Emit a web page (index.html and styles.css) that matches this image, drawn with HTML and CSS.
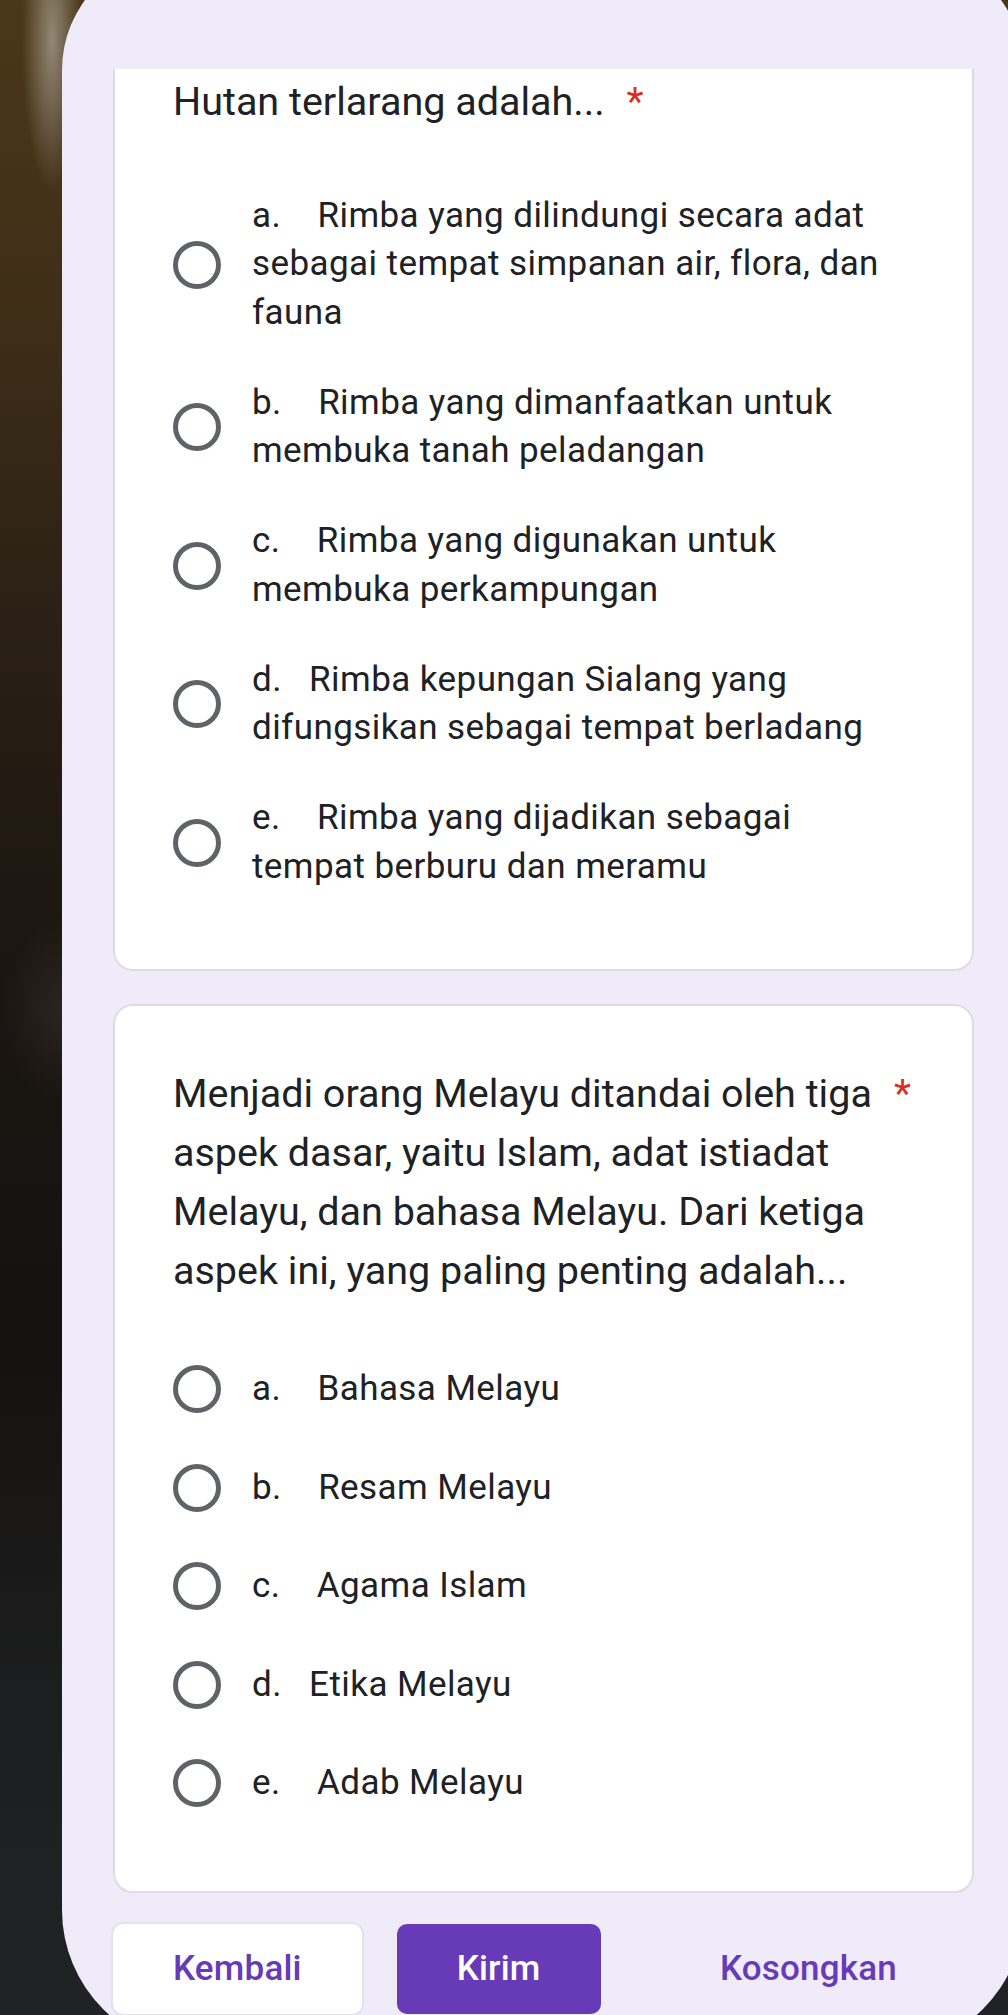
FILE: index.html
```html
<!DOCTYPE html>
<html lang="id">
<head>
<meta charset="utf-8">
<title>Formulir</title>
<link rel="stylesheet" href="styles.css">
</head>
<body>
<div class="panel">
  <section class="card card--cut">
    <div class="q-title"><span class="q-text">Hutan terlarang adalah...</span><span class="req">*</span></div>
    <div class="options">
      <div class="opt"><span class="radio"></span><span class="opt-text">a.    Rimba yang dilindungi secara adat<br>sebagai tempat simpanan air, flora, dan<br>fauna</span></div>
      <div class="opt"><span class="radio"></span><span class="opt-text">b.    Rimba yang dimanfaatkan untuk<br>membuka tanah peladangan</span></div>
      <div class="opt"><span class="radio"></span><span class="opt-text">c.    Rimba yang digunakan untuk<br>membuka perkampungan</span></div>
      <div class="opt"><span class="radio"></span><span class="opt-text">d.   Rimba kepungan Sialang yang<br>difungsikan sebagai tempat berladang</span></div>
      <div class="opt"><span class="radio"></span><span class="opt-text">e.    Rimba yang dijadikan sebagai<br>tempat berburu dan meramu</span></div>
    </div>
  </section>
  <section class="card">
    <div class="q-title"><span class="q-text">Menjadi orang Melayu ditandai oleh tiga<br>aspek dasar, yaitu Islam, adat istiadat<br>Melayu, dan bahasa Melayu. Dari ketiga<br>aspek ini, yang paling penting adalah...</span><span class="req">*</span></div>
    <div class="options">
      <div class="opt"><span class="radio"></span><span class="opt-text">a.    Bahasa Melayu</span></div>
      <div class="opt"><span class="radio"></span><span class="opt-text">b.    Resam Melayu</span></div>
      <div class="opt"><span class="radio"></span><span class="opt-text">c.    Agama Islam</span></div>
      <div class="opt"><span class="radio"></span><span class="opt-text">d.   Etika Melayu</span></div>
      <div class="opt"><span class="radio"></span><span class="opt-text">e.    Adab Melayu</span></div>
    </div>
  </section>
  <div class="actions">
    <button class="btn btn--back" type="button">Kembali</button>
    <button class="btn btn--submit" type="button">Kirim</button>
    <button class="btn btn--clear" type="button">Kosongkan</button>
  </div>
</div>
</body>
</html>
```

FILE: styles.css
```css
html, body {
  margin: 0;
  height: 2015px;
  overflow: hidden;
}

body {
  font-family: Roboto, "Noto Sans", "Liberation Sans", sans-serif;
  background:
    radial-gradient(ellipse 30px 150px at 52px 40px, rgba(150, 140, 122, 0.95), rgba(150, 140, 122, 0) 100%),
    radial-gradient(ellipse 60px 90px at 60px 1010px, rgba(60, 50, 44, 0.5), rgba(60, 50, 44, 0) 100%),
    linear-gradient(to bottom, #4b3719 0, #3f2e18 320px, #2a2015 620px, #1a1511 1000px, #151210 1350px, #1d1e1f 1700px, #202326 2015px);
}

.panel {
  box-sizing: border-box;
  width: 962px;
  height: 2098px;
  margin: -48px 0 0 62px;
  padding: 117px 50px 0 51px;
  background: #efebf8;
  border-radius: 118px 118px 140px 140px;
}

.card {
  background: #fff;
  border: 2px solid #dedce3;
  border-radius: 20px;
  padding: 58px;
  color: #202124;
}

.card--cut {
  border-top: 0;
  border-radius: 0 0 20px 20px;
  padding-top: 3px;
  padding-bottom: 57px;
}

.card + .card {
  margin-top: 33px;
}

.q-title {
  display: flex;
  align-items: flex-start;
  font-size: 39.5px;
  line-height: 59px;
  margin-bottom: 40px;
}

.req {
  color: #d93025;
  margin-left: 22px;
}

.opt {
  display: flex;
  align-items: center;
  min-height: 57px;
  padding: 20.75px 0;
}

.radio {
  box-sizing: border-box;
  flex: none;
  width: 48px;
  height: 48px;
  border: 5px solid #5f6368;
  border-radius: 50%;
  margin-right: 31px;
}

.opt-text {
  font-size: 35px;
  line-height: 48.5px;
  letter-spacing: 0.42px;
  white-space: pre-wrap;
}

.actions {
  display: flex;
  align-items: flex-start;
  gap: 35px;
  margin-top: 31px;
}

.btn {
  box-sizing: border-box;
  height: 90px;
  padding: 0 60px;
  border: 0;
  border-radius: 10px;
  font-family: Roboto, "Noto Sans", sans-serif;
  font-weight: 500;
  font-size: 35px;
  letter-spacing: 0.2px;
  cursor: pointer;
}

.btn--back {
  background: #fff;
  color: #673ab7;
  box-shadow: 0 0 0 2px #e4e1ea;
}

.btn--submit {
  background: #673ab7;
  color: #fff;
}

.btn--clear {
  background: transparent;
  color: #673ab7;
  margin-left: auto;
  margin-right: 17px;
}
```
